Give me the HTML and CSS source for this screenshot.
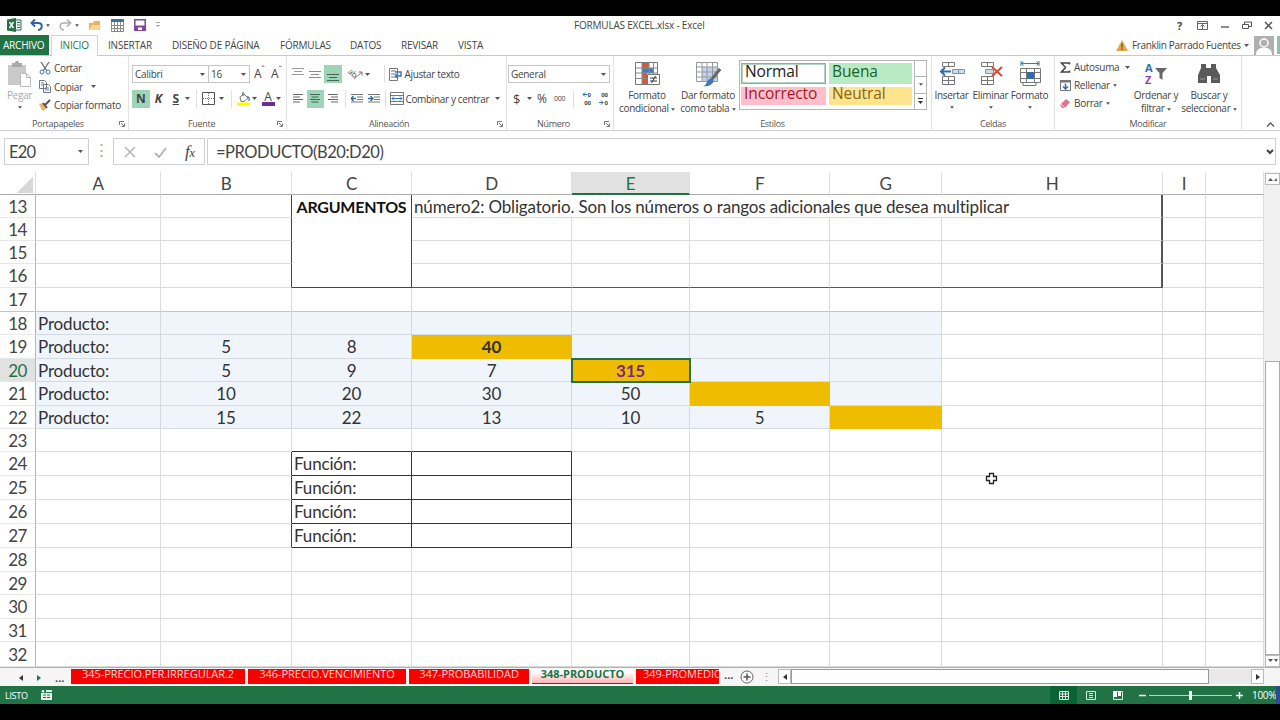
FILE: index.html
```
<!DOCTYPE html>
<html lang="es">
<head>
    <meta charset="UTF-8">
    <meta name="viewport" content="width=device-width, initial-scale=1.0">
    <title>FORMULAS EXCEL.xlsx - Excel</title>
    <link rel="stylesheet" href="styles.css">
</head>
<body>
    <svg class="defs">
        <symbol id="flecha" viewBox="0 0 5 3"><path d="M0 0h5L2.5 3z" fill="#555"/></symbol>
        <symbol id="esquina" viewBox="0 0 6 6"><path d="M.5 4V.5H5M2 2l3 3M5.5 2.5v3h-3" fill="none" stroke="#777"/></symbol>
    </svg>
    <div class="ventana">
        <!-- Barra de título -->
        <div class="titulo">
            <div class="rapido">
                <svg width="15" height="14" viewBox="0 0 15 14"><path d="M8 2h6v10H8" fill="#fff" stroke="#217346"/><path d="M10 4.5h3M10 7h3M10 9.5h3" stroke="#217346"/><path d="M0 1.5L9 0v14L0 12.5z" fill="#217346"/><path d="M2.5 4l4 6M6.500 4l-4 6" stroke="#fff" stroke-width="1.4"/></svg>
                <svg class="q1" width="13" height="12" viewBox="0 0 13 12"><path d="M1 4h7c5 0 5 6 0 7M5 .5L1.500 4 5 7.500" fill="none" stroke="#2f64a5" stroke-width="2"/></svg>
                <svg class="q2" width="4" height="3"><use href="#flecha"/></svg>
                <svg class="q3" width="13" height="12" viewBox="0 0 13 12"><path d="M12 4H5C0 4 0 10 5 11M8 .5L11.500 4 8 7.500" fill="none" stroke="#b0b0b0" stroke-width="1.600"/></svg>
                <svg class="q2" width="4" height="3"><use href="#flecha"/></svg>
                <svg class="q4" width="14" height="12" viewBox="0 0 14 12"><path d="M1 11V4h4l1-2h6v9z" fill="#e8b458"/><path d="M1 11l3-5h9l-2 5z" fill="#f6d795"/></svg>
                <svg class="q5" width="13" height="13" viewBox="0 0 13 13"><path d="M.5 .5h12v12H.5zM.5 6.500h12M.5 9.500h12M3.500 3v10M6.500 3v10M9.500 3v10" fill="#fff" stroke="#8b8b8b"/><path d="M0 0h13v3H0z" fill="#3f6fa8"/></svg>
                <svg class="q6" width="12" height="12" viewBox="0 0 12 12"><path d="M.8 .8h10.400v10.400H.8z" fill="#fff" stroke="#80479b" stroke-width="1.500"/><path d="M1 6.500h10V11H1z" fill="#80479b"/><path d="M4 8.500h4V11H4z" fill="#fff"/></svg>
                <svg class="q7" width="4" height="6" viewBox="0 0 4 6"><path d="M0 .5h4" stroke="#aaa"/><path d="M0 3h4L2 5z" fill="#999"/></svg>
            </div>
            <span class="nombre">FORMULAS EXCEL.xlsx - Excel</span>
            <div class="controles">
                <b>?</b>
                <svg width="11" height="9" viewBox="0 0 11 9"><path d="M.5 .5h10v8H.5zM.5 2.500h10M5.500 8V4M3.500 5.500l2-2 2 2" fill="none" stroke="#666"/></svg>
                <svg width="10" height="9" viewBox="0 0 10 9"><path d="M1 6h8" stroke="#666" stroke-width="1.500"/></svg>
                <svg width="10" height="9" viewBox="0 0 10 9"><path d="M.5 3.500h6v4h-6zM2.500 3V1h7v4.500H7" fill="none" stroke="#555"/></svg>
                <svg width="9" height="9" viewBox="0 0 9 9"><path d="M1 1l7 7M8 1L1 8" stroke="#555" stroke-width="1.500"/></svg>
            </div>
        </div>

        <!-- Pestañas -->
        <div class="pestanas">
            <span class="archivo">ARCHIVO</span>
            <span class="activa">INICIO</span>
            <span class="p1">INSERTAR</span>
            <span class="p2">DISEÑO DE PÁGINA</span>
            <span class="p3">FÓRMULAS</span>
            <span class="p4">DATOS</span>
            <span class="p5">REVISAR</span>
            <span class="p6">VISTA</span>
            <div class="usuario">
                <svg width="12" height="11" viewBox="0 0 12 11"><path d="M6 0l6 11H0z" fill="#e0a84a"/><path d="M6 3.500v4M6 8.500v1.500" stroke="#5a4520" stroke-width="1.200"/></svg>
                <span>Franklin Parrado Fuentes</span>
                <svg width="5" height="3"><use href="#flecha"/></svg>
                <svg class="avatar" width="20" height="19" viewBox="0 0 20 19"><path d="M0 0h20v19H0z" fill="#b0b0b0"/><circle cx="10" cy="7" r="4" fill="#b0b0b0" stroke="#fff" stroke-width="1.500"/><path d="M2 19c0-5 3-7 6-7h4c3 0 6 2 6 7z" fill="#fff"/></svg>
                <i></i>
            </div>
        </div>

        <!-- Cinta de opciones -->
        <div class="cinta">
            <div class="grupo g1">
                <div class="cuerpo">
                    <div class="grande pegar">
                        <svg width="25" height="28" viewBox="0 0 25 28"><path d="M1 4h18v20H1z" fill="#c9c9c9"/><path d="M5 2h3c0-3 4-3 4 0h3v4H5z" fill="#aaa"/><path d="M13.500 12.500h6l4 4v9h-10z" fill="#fff" stroke="#bbb"/><path d="M19.500 12.500v4h4" fill="none" stroke="#bbb"/></svg>
                        <span>Pegar</span>
                        <svg width="4" height="3"><use href="#flecha"/></svg>
                    </div>
                    <div class="lista">
                        <div><svg width="12" height="13" viewBox="0 0 12 13"><path d="M2 0l6 9M10 0L4 9" stroke="#666" stroke-width="1.200"/><circle cx="3" cy="10" r="2" fill="none" stroke="#3d78ae"/><circle cx="9" cy="10" r="2" fill="none" stroke="#3d78ae"/></svg><span>Cortar</span></div>
                        <div><svg width="12" height="13" viewBox="0 0 12 13"><path d="M.5 .5h5l2 2v6h-7zM4.500 4.500h5l2 2v6h-7z" fill="#fff" stroke="#777"/><path d="M6 8h4M6 10h4M2 3h3M2 5h2" stroke="#4c82bb"/></svg><span>Copiar</span><svg class="fl" width="5" height="3"><use href="#flecha"/></svg></div>
                        <div><svg width="12" height="12" viewBox="0 0 12 12"><path d="M0 5l5-1 3 4-3 4-2-1z" fill="#e8b468"/><path d="M4 4l4 5M6 6l5-5" stroke="#555" stroke-width="2"/></svg><span>Copiar formato</span></div>
                    </div>
                </div>
                <div class="pie">Portapapeles<svg width="6" height="6"><use href="#esquina"/></svg></div>
            </div>

            <div class="grupo g2">
                <div class="filas">
                    <div class="fila">
                        <span class="combo fuente">Calibri<svg width="5" height="3"><use href="#flecha"/></svg></span>
                        <span class="combo tam">16<svg width="5" height="3"><use href="#flecha"/></svg></span>
                        <span class="letra">A<sup>ˆ</sup></span>
                        <span class="letra">A<sup>ˇ</sup></span>
                    </div>
                    <div class="fila">
                        <b class="caja on">N</b><b class="caja"><i>K</i></b><b class="caja"><u>S</u></b>
                        <svg width="5" height="3"><use href="#flecha"/></svg>
                        <i class="sep s1"></i>
                        <svg width="13" height="13" viewBox="0 0 13 13"><path d="M.5 .5h12v12H.5z" fill="#fff" stroke="#555"/><path d="M6.500 1v11M1 6.500h11" stroke="#777" stroke-dasharray="1 1"/></svg>
                        <svg class="f1" width="5" height="3"><use href="#flecha"/></svg>
                        <i class="sep s2"></i>
                        <svg width="15" height="14" viewBox="0 0 15 14"><path d="M4 5l4-3 4 4-4 3.500H5z" fill="#fff" stroke="#777"/><path d="M7 0v4M11 5c3 0 2 2 2 4" fill="none" stroke="#3e75ad" stroke-width="1.300"/><path d="M1 10.500h13V14H1z" fill="#ff0"/></svg>
                        <svg class="f2" width="5" height="3"><use href="#flecha"/></svg>
                        <span class="color">A</span>
                        <svg class="f2" width="5" height="3"><use href="#flecha"/></svg>
                    </div>
                </div>
                <div class="pie">Fuente<svg width="6" height="6"><use href="#esquina"/></svg></div>
            </div>

            <div class="grupo g3">
                <div class="filas">
                    <div class="fila">
                        <span class="caja"><svg width="12" height="13" viewBox="0 0 12 13"><path d="M0 .5h12M2 3.500h8M0 6.500h12" stroke="#999"/></svg></span>
                        <span class="caja"><svg width="12" height="13" viewBox="0 0 12 13"><path d="M0 3.500h12M2 6.500h8M0 9.500h12" stroke="#888"/></svg></span>
                        <span class="caja on"><svg width="12" height="13" viewBox="0 0 12 13"><path d="M0 6.500h12M2 9.500h8M0 12.500h12" stroke="#4a6659"/></svg></span>
                        <svg class="orienta" width="13" height="12" viewBox="0 0 13 12"><text x="1" y="5" transform="rotate(40)">ab</text><path d="M4 11l8-7M8.500 4H12v3.500" fill="none" stroke="#777"/></svg>
                        <svg class="f3" width="5" height="3"><use href="#flecha"/></svg>
                        <i class="sep s3"></i>
                        <svg width="14" height="13" viewBox="0 0 14 13"><path d="M.5 .5h8v12h-8zM2 3h5M2 6h5M2 9h5" fill="#fff" stroke="#777"/><path d="M6 4h6v4H7M9 5.500L6.500 8 9 10.500" fill="none" stroke="#3c78b5" stroke-width="1.500"/></svg>
                        <span class="txt">Ajustar texto</span>
                    </div>
                    <div class="fila">
                        <span class="caja"><svg width="10" height="9" viewBox="0 0 10 9"><path d="M0 .5h10M0 3h7M0 5.500h10M0 8h7" stroke="#666"/></svg></span>
                        <span class="caja on"><svg width="10" height="9" viewBox="0 0 10 9"><path d="M0 .5h10M1.500 3h7M0 5.500h10M1.500 8h7" stroke="#4a6659"/></svg></span>
                        <span class="caja"><svg width="10" height="9" viewBox="0 0 10 9"><path d="M0 .5h10M3 3h7M0 5.500h10M3 8h7" stroke="#666"/></svg></span>
                        <i class="sep s4"></i>
                        <svg width="12" height="9" viewBox="0 0 12 9"><path d="M0 .5h12M6 3h6M6 5.500h6M0 8h12" stroke="#777"/><path d="M5 4.500H0M2.500 2L0 4.500 2.500 7" fill="none" stroke="#2d6aa8" stroke-width="1.300"/></svg>
                        <svg class="sangria" width="12" height="9" viewBox="0 0 12 9"><path d="M0 .5h12M6 3h6M6 5.500h6M0 8h12" stroke="#777"/><path d="M0 4.500h5M2.500 2L5 4.500 2.500 7" fill="none" stroke="#2d6aa8" stroke-width="1.300"/></svg>
                        <i class="sep s5"></i>
                        <svg width="14" height="13" viewBox="0 0 14 13"><path d="M.5 .5h13v12H.5zM1 3.500h12M1 9.500h12" fill="#fff" stroke="#777"/><path d="M2 6.500h10M4 4.500l-2 2 2 2M10 4.500l2 2-2 2" fill="none" stroke="#3c78b5"/></svg>
                        <span class="txt">Combinar y centrar</span>
                        <svg class="f4" width="5" height="3"><use href="#flecha"/></svg>
                    </div>
                </div>
                <div class="pie">Alineación<svg width="6" height="6"><use href="#esquina"/></svg></div>
            </div>

            <div class="grupo g4">
                <div class="filas">
                    <div class="fila"><span class="combo general">General<svg width="5" height="3"><use href="#flecha"/></svg></span></div>
                    <div class="fila numero">
                        <span class="pesos">$</span><svg width="5" height="3"><use href="#flecha"/></svg>
                        <span class="pct">%</span><span class="miles">000</span>
                        <i class="sep s6"></i>
                        <div class="dec">
                            <div><svg width="5" height="5" viewBox="0 0 5 5"><path d="M5 2.500H1M3 .5l-2 2 2 2" fill="none" stroke="#2e6db0"/></svg><span>0</span></div>
                            <div><span>00</span></div>
                        </div>
                        <div class="dec">
                            <div><span>00</span></div>
                            <div><svg width="5" height="5" viewBox="0 0 5 5"><path d="M0 2.500h4M2 .5l2 2-2 2" fill="none" stroke="#2e6db0"/></svg><span>0</span></div>
                        </div>
                    </div>
                </div>
                <div class="pie">Número<svg width="6" height="6"><use href="#esquina"/></svg></div>
            </div>

            <div class="grupo g5">
                <div class="cuerpo">
                    <div class="grande cond">
                        <svg width="26" height="26" viewBox="0 0 26 26"><path d="M1.500 1.500h22v22h-22z" fill="#fff" stroke="#777"/><path d="M8 2h7v5H8zM8 17h7v6H8z" fill="#d9573b"/><path d="M8 7h11v5H8z" fill="#3f7fc1"/><path d="M8 12h5v5H8z" fill="#d9573b"/><path d="M1.500 7h22M1.500 12h22M1.500 17.500h22M8 1.500v22M15 1.500v22M19.500 1.500v22" fill="none" stroke="#888"/><path d="M13.500 13.500h12v10h-12z" fill="#fff" stroke="#777"/><path d="M16 17h7M16 20h7M21.500 15l-4 7" stroke="#333"/></svg>
                        <span>Formato</span>
                        <span>condicional <svg width="4" height="3"><use href="#flecha"/></svg></span>
                    </div>
                    <div class="grande tabla">
                        <svg width="26" height="26" viewBox="0 0 26 26"><path d="M1.500 1.500h21v19h-21z" fill="#fff"/><path d="M7 6h15v14H7z" fill="#bcd3ea"/><path d="M1.500 1.500h21v19h-21zM1.500 6h21M1.500 11h21M1.500 16h21M7 1v20M12 1v20M17.500 1v20" fill="none" stroke="#999"/><path d="M25 8l-8 10" stroke="#666" stroke-width="3"/><path d="M8 25c4 0 3-6 8-8l3 3c-2 4-6 6-11 5z" fill="#3f78b5"/></svg>
                        <span>Dar formato</span>
                        <span>como tabla <svg width="4" height="3"><use href="#flecha"/></svg></span>
                    </div>
                    <div class="galeria">
                        <span class="normal">Normal</span><span class="buena">Buena</span>
                        <span class="incorrecto">Incorrecto</span><span class="neutral">Neutral</span>
                    </div>
                    <div class="desliza">
                        <span></span>
                        <span><svg width="4" height="3"><use href="#flecha"/></svg></span>
                        <span><svg width="5" height="6" viewBox="0 0 5 6"><path d="M0 .5h5" stroke="#333"/><path d="M0 3h5L2.500 6z" fill="#333"/></svg></span>
                    </div>
                </div>
                <div class="pie">Estilos</div>
            </div>

            <div class="grupo g6">
                <div class="cuerpo">
                    <div class="grande">
                        <svg width="26" height="26" viewBox="0 0 26 26"><path d="M3.500 1.500h12v4h-12zM9.500 1.500v4M3.500 15.500h12v8h-12zM9.500 15.500v8M3.500 19.500h12" fill="#fff" stroke="#777"/><path d="M13.500 8.500h12v4h-12zM19.500 8.500v4" fill="#c8dbf0" stroke="#7b93b5"/><path d="M12 10.500H2M6 6.500l-4 4 4 4" fill="none" stroke="#2e6db0" stroke-width="2"/></svg>
                        <span>Insertar</span><svg width="4" height="3"><use href="#flecha"/></svg>
                    </div>
                    <div class="grande">
                        <svg width="26" height="26" viewBox="0 0 26 26"><path d="M3.500 1.500h12v4h-12zM9.500 1.500v4M3.500 15.500h12v8h-12zM9.500 15.500v8M3.500 19.500h12" fill="#fff" stroke="#777"/><path d="M7.500 8.500h8v4h-8z" fill="#c8dbf0" stroke="#7b93b5"/><path d="M14 6l10 9M24 6l-10 9" stroke="#d9482b" stroke-width="2"/></svg>
                        <span>Eliminar</span><svg width="4" height="3"><use href="#flecha"/></svg>
                    </div>
                    <div class="grande">
                        <svg width="26" height="26" viewBox="0 0 26 26"><path d="M4 2.500h18M4 0v5M22 0v5M6.500 .5l-2 2 2 2M19.500 .5l2 2-2 2" fill="none" stroke="#3f78b5"/><path d="M3.500 7.500h20v14h-20zM3.500 11.500h20M3.500 17.500h20M9.500 7.500v14M17.500 7.500v14M6 21.500v3h13v-3" fill="#fff" stroke="#777"/><path d="M10 11h7v7h-7z" fill="#2e6db0"/></svg>
                        <span>Formato</span><svg width="4" height="3"><use href="#flecha"/></svg>
                    </div>
                </div>
                <div class="pie">Celdas</div>
            </div>

            <div class="grupo g7">
                <div class="cuerpo">
                    <div class="lista edicion">
                        <div><svg width="11" height="11" viewBox="0 0 11 11"><path d="M9.500 2.500V1H1.500l4 4.500-4 4.500h8V8.500" fill="none" stroke="#444" stroke-width="1.500"/></svg><span>Autosuma</span><svg class="fa" width="5" height="3"><use href="#flecha"/></svg></div>
                        <div><svg width="11" height="11" viewBox="0 0 11 11"><path d="M.5 .5h10v10H.5z" fill="#fff" stroke="#777"/><path d="M0 0h11v2.500H0z" fill="#777"/><path d="M5.500 3.500V9M3 6.500L5.500 9 8 6.500" fill="none" stroke="#2e6db0" stroke-width="1.500"/></svg><span>Rellenar</span><svg class="fb" width="4" height="3"><use href="#flecha"/></svg></div>
                        <div><svg width="11" height="11" viewBox="0 0 11 11"><path d="M6 1l4 3-5 6H2L0 7z" fill="#e5728d"/><path d="M1 6l4 4" stroke="#fff"/></svg><span>Borrar</span><svg class="fb" width="4" height="3"><use href="#flecha"/></svg></div>
                    </div>
                    <div class="grande ordenar">
                        <div class="orden">
                            <div class="az"><b>A</b><b class="zz">Z</b></div>
                            <svg width="12" height="13" viewBox="0 0 12 13"><path d="M0 0h12L7.500 5v7l-3-2V5z" fill="#666"/></svg>
                        </div>
                        <span>Ordenar y</span>
                        <span>filtrar <svg width="4" height="3"><use href="#flecha"/></svg></span>
                    </div>
                    <div class="grande buscar">
                        <svg width="26" height="26" viewBox="0 0 26 26"><path d="M5 3h5v4h5V3h5v4l4 7v8h-9v-7h-4v7H2v-8l3-7z" fill="#5a5a5a"/><path d="M4 18h5M17 18h5" stroke="#999"/></svg>
                        <span>Buscar y</span>
                        <span>seleccionar <svg width="4" height="3"><use href="#flecha"/></svg></span>
                    </div>
                </div>
                <div class="pie">Modificar</div>
            </div>
            <div class="plegar"><svg width="9" height="5" viewBox="0 0 9 5"><path d="M1 4.500L4.500 1 8 4.500" fill="none" stroke="#555" stroke-width="1.300"/></svg></div>
        </div>

        <!-- Barra de fórmulas -->
        <div class="formulas">
            <div class="celda-actual">E20<svg width="5" height="3"><use href="#flecha"/></svg></div>
            <span class="puntos">⋮</span>
            <div class="botones">
                <svg width="12" height="12" viewBox="0 0 12 12"><path d="M1 1l10 10M11 1L1 11" stroke="#b5b5b5" stroke-width="1.500"/></svg>
                <svg width="13" height="12" viewBox="0 0 13 12"><path d="M1 7l4 4 7-9" fill="none" stroke="#b5b5b5" stroke-width="2"/></svg>
                <span class="fx">f<small>x</small></span>
            </div>
            <div class="entrada"><span>=PRODUCTO(B20:D20)</span><svg width="8" height="6" viewBox="0 0 8 6"><path d="M1 1l3 3 3-3" fill="none" stroke="#444" stroke-width="2"/></svg></div>
        </div>

        <!-- Hoja -->
        <div class="hoja">
            <table>
                <colgroup><col class="c0"><col class="cA"><col class="cB"><col class="cC"><col class="cD"><col class="cE"><col class="cF"><col class="cG"><col class="cH"><col class="cI"><col class="cJ"></colgroup>
                <tr class="cab"><th class="todo"><i></i></th><th>A</th><th>B</th><th>C</th><th>D</th><th class="sel">E</th><th>F</th><th>G</th><th>H</th><th>I</th><th></th></tr>
                <tr class="h23"><th>13</th><td></td><td class="nd"></td><td rowspan="4" class="arg">ARGUMENTOS</td><td colspan="5" class="texto der"><span>número2: Obligatorio. Son los números o rangos adicionales que desea multiplicar</span></td><td></td><td></td></tr>
                <tr class="h23"><th>14</th><td></td><td class="nd"></td><td></td><td></td><td></td><td></td><td class="der"></td><td></td><td></td></tr>
                <tr class="h23"><th>15</th><td></td><td class="nd"></td><td></td><td></td><td></td><td></td><td class="der"></td><td></td><td></td></tr>
                <tr class="h24"><th>16</th><td></td><td class="nd"></td><td class="ab"></td><td class="ab"></td><td class="ab"></td><td class="ab"></td><td class="ab der"></td><td></td><td></td></tr>
                <tr class="h24 previa"><th>17</th><td></td><td></td><td></td><td></td><td></td><td></td><td></td><td></td><td></td><td></td></tr>
                <tr class="h23 azul"><th>18</th><td class="texto">Producto:</td><td></td><td></td><td></td><td></td><td></td><td></td><td></td><td></td><td></td></tr>
                <tr class="h24 azul"><th>19</th><td class="texto">Producto:</td><td>5</td><td>8</td><td class="oro">40</td><td></td><td></td><td></td><td></td><td></td><td></td></tr>
                <tr class="h23 azul"><th class="sel">20</th><td class="texto">Producto:</td><td>5</td><td>9</td><td>7</td><td class="oro cursor">315</td><td></td><td></td><td></td><td></td><td></td></tr>
                <tr class="h24 azul"><th>21</th><td class="texto">Producto:</td><td>10</td><td>20</td><td>30</td><td>50</td><td class="oro"></td><td></td><td></td><td></td><td></td></tr>
                <tr class="h23 azul"><th>22</th><td class="texto">Producto:</td><td>15</td><td>22</td><td>13</td><td>10</td><td>5</td><td class="oro"></td><td></td><td></td><td></td></tr>
                <tr class="h23 antes"><th>23</th><td></td><td></td><td></td><td></td><td></td><td></td><td></td><td></td><td></td><td></td></tr>
                <tr class="h24"><th>24</th><td></td><td class="nd"></td><td class="fun">Función:</td><td class="fun"></td><td></td><td></td><td></td><td></td><td></td><td></td></tr>
                <tr class="h24"><th>25</th><td></td><td class="nd"></td><td class="fun">Función:</td><td class="fun"></td><td></td><td></td><td></td><td></td><td></td><td></td></tr>
                <tr class="h24"><th>26</th><td></td><td class="nd"></td><td class="fun">Función:</td><td class="fun"></td><td></td><td></td><td></td><td></td><td></td><td></td></tr>
                <tr class="h24"><th>27</th><td></td><td class="nd"></td><td class="fun">Función:</td><td class="fun"></td><td></td><td></td><td></td><td></td><td></td><td></td></tr>
                <tr class="h24"><th>28</th><td></td><td></td><td></td><td></td><td></td><td></td><td></td><td></td><td></td><td></td></tr>
                <tr class="h23"><th>29</th><td></td><td></td><td></td><td></td><td></td><td></td><td></td><td></td><td></td><td></td></tr>
                <tr class="h24"><th>30</th><td></td><td></td><td></td><td></td><td></td><td></td><td></td><td></td><td></td><td></td></tr>
                <tr class="h23"><th>31</th><td></td><td></td><td></td><td></td><td></td><td></td><td></td><td></td><td></td><td></td></tr>
                <tr class="h25"><th>32</th><td></td><td></td><td></td><td></td><td></td><td></td><td></td><td></td><td></td><td></td></tr>
            </table>
            <div class="vertical">
                <span class="sube"><svg width="9" height="4" viewBox="0 0 9 4"><path d="M0 4l2.500-3L5 4zM6 4l2.500-3L9 4z" fill="#555"/></svg></span>
                <div class="pista"></div>
                <div class="pulgar"></div>
                <span class="baja"><svg width="10" height="4" viewBox="0 0 10 4"><path d="M0 0h5L2.500 3zM6 0h4L8 3z" fill="#555"/></svg></span>
            </div>
            <svg class="puntero" width="15" height="15" viewBox="0 0 15 15"><path d="M5.500 2.500h4v3h3v4h-3v3h-4v-3h-3v-4h3z" fill="#fff" stroke="#222" stroke-width="1.300"/></svg>
        </div>

        <!-- Pestañas de las hojas -->
        <div class="hojas">
            <div class="nav"><svg width="4" height="6" viewBox="0 0 4 6"><path d="M4 0v6L0 3z" fill="#333"/></svg><svg width="4" height="6" viewBox="0 0 4 6"><path d="M0 0v6l4-3z" fill="#217346"/></svg><span>...</span></div>
            <span class="t1">345-PRECIO.PER.IRREGULAR.2</span>
            <span class="t2">346-PRECIO.VENCIMIENTO</span>
            <span class="t3">347-PROBABILIDAD</span>
            <span class="t4">348-PRODUCTO</span>
            <span class="t5">349-PROMEDIO</span>
            <div class="mas">...</div>
            <svg class="nueva" width="14" height="14" viewBox="0 0 14 14"><circle cx="7" cy="7" r="6" fill="#fff" stroke="#666"/><path d="M7 3.500v7M3.500 7h7" stroke="#555" stroke-width="1.500"/></svg>
            <span class="tres">⋮</span>
            <div class="horizontal">
                <span class="lado"><svg width="4" height="6" viewBox="0 0 4 6"><path d="M4 0v6L0 3z" fill="#333"/></svg></span>
                <div class="barra"></div>
                <span class="lado fin"><svg width="4" height="6" viewBox="0 0 4 6"><path d="M0 0v6l4-3z" fill="#333"/></svg></span>
            </div>
        </div>

        <!-- Barra de estado -->
        <div class="estado">
            <span class="listo">LISTO</span>
            <svg width="11" height="10" viewBox="0 0 11 10"><path d="M0 3h11v7H0zM5 0h6v2H5z" fill="#e6f0ea"/><circle cx="2" cy="1.300" r="1.300" fill="#fff"/><path d="M2 5h3M6 5h3M2 7.500h3M6 7.500h3" stroke="#217346"/></svg>
            <div class="vistas">
                <span class="vista on"><svg width="10" height="9" viewBox="0 0 10 9"><path d="M.5 .5h9v8h-9zM.5 3h9M.5 5.500h9M3.500 0v9M6.500 0v9" fill="none" stroke="#dcebe2"/></svg></span>
                <span class="vista"><svg width="10" height="9" viewBox="0 0 10 9"><path d="M.5 .5h9v8h-9zM3 2.500h4M3 4.500h4M3 6.500h4" fill="none" stroke="#dcebe2"/></svg></span>
                <span class="vista"><svg width="10" height="9" viewBox="0 0 10 9"><path d="M.5 .5h9v8h-9z" fill="none" stroke="#dcebe2"/><path d="M0 0h4v6H0zM5 0h3v5H5z" fill="#fff"/></svg></span>
            </div>
            <svg width="104" height="11" viewBox="0 0 104 11"><path d="M0 5.500h7M97 5.500h7M100.500 2v7" stroke="#fff" stroke-width="1.500"/><path d="M10 5.500h83" stroke="#b9d4c5"/><path d="M50 1h3v9h-3z" fill="#fff"/></svg>
            <span class="zoom">100%</span>
            <i></i>
        </div>
    </div>
</body>
</html>
```
FILE: styles.css
```
* {
    box-sizing: border-box;
}
body {
    margin: 0;
    padding: 16px 0;
    height: 720px;
    background-color: #000;
    font-family: "Open Sans", "Noto Sans", sans-serif;
    font-size: 10px;
    letter-spacing: -0.3px;
    color: #444;
    overflow: hidden;
}
.defs {
    display: none;
}
svg {
    flex: none;
}
.ventana {
    display: flex;
    flex-direction: column;
    width: 1280px;
    height: 688px;
    background-color: #fff;
    overflow: hidden;
}
/* Título */
.titulo {
    display: flex;
    align-items: center;
    height: 19px;
    padding-bottom: 1px;
}
.rapido {
    display: flex;
    align-items: center;
    width: 574px;
    padding-left: 7px;
}
.q1 { margin-left: 8px; }
.q2 { margin-left: 3px; }
.q3 { margin-left: 9px; }
.q4 { margin-left: 9px; }
.q5 { margin-left: 9px; }
.q6 { margin-left: 10px; }
.q7 { margin-left: 10px; }
.nombre {
    flex: 1;
    letter-spacing: -0.2px;
}
.controles {
    display: flex;
    align-items: center;
    gap: 12px;
    padding-right: 7px;
}
.controles b {
    width: 8px;
    font-size: 11px;
}
/* Pestañas */
.pestanas {
    display: flex;
    height: 21px;
    border-bottom: 1px solid #c8c8c8;
    line-height: 20px;
    letter-spacing: -0.2px;
    white-space: nowrap;
}
.archivo {
    width: 49px;
    padding-left: 3px;
    background-color: #217346;
    color: #fff;
}
.activa {
    width: 47px;
    height: 21px;
    margin-left: 2px;
    padding-left: 8px;
    border: 1px solid #d4d4d4;
    border-bottom: none;
    background-color: #fff;
    color: #217346;
    line-height: 18px;
}
.p1 { width: 64px; margin-left: 10px; }
.p2 { width: 108px; }
.p3 { width: 70px; }
.p4 { width: 51px; }
.p5 { width: 57px; }
.usuario {
    display: flex;
    align-items: center;
    margin-left: auto;
    letter-spacing: -0.35px;
}
.usuario span {
    width: 108px;
    margin: 0 4px;
}
.avatar { margin: 0 3px 0 5px; }
.usuario i {
    width: 3px;
    height: 18px;
    background-color: #8ebfb2;
}
/* Cinta */
.cinta {
    display: flex;
    height: 75px;
    border-bottom: 1px solid #d0d0d0;
    white-space: nowrap;
}
.grupo {
    display: flex;
    flex-direction: column;
    border-right: 1px solid #e2e2e2;
}
.g1 { width: 129px; }
.g2 { width: 158px; }
.g3 { width: 220px; }
.g4 { width: 107px; }
.g5 { width: 318px; }
.g6 { width: 123px; }
.g7 { width: 187px; }
.cuerpo {
    display: flex;
    height: 61px;
}
.pie {
    display: flex;
    justify-content: center;
    align-items: center;
    height: 13px;
    font-size: 9px;
    color: #555;
}
.pie svg {
    margin-left: auto;
    margin-right: 3px;
}
.g1 .pie, .g2 .pie, .g3 .pie, .g4 .pie { justify-content: flex-start; }
.g1 .pie { padding-left: 32px; }
.g2 .pie { padding-left: 59px; }
.g3 .pie { padding-left: 82px; }
.g4 .pie { padding-left: 30px; }
.grande {
    display: flex;
    flex-direction: column;
    align-items: center;
    width: 39px;
    padding-top: 5px;
    line-height: 13px;
}
.grande > svg:first-child {
    margin-bottom: 2px;
}
.grande > svg:last-child {
    margin-top: 4px;
}
.pegar > svg:first-child { margin-bottom: 0; }
.pegar { color: #aaa; }
.cond { width: 66px; }
.tabla { width: 56px; margin-right: 2px; }
.ordenar { width: 54px; }
.buscar { width: 52px; }
.grande span svg { vertical-align: middle; }
.orden {
    display: flex;
    align-items: center;
    gap: 3px;
    width: 22px;
    height: 26px;
    margin-bottom: 2px;
}
.az {
    display: flex;
    flex-direction: column;
    width: 8px;
    color: #2e6db0;
    font-size: 11px;
    line-height: 12px;
}
.zz { color: #8a44b5; }
.lista div {
    display: flex;
    align-items: center;
    height: 18.5px;
}
.lista {
    padding-top: 3px;
}
.lista span { margin-left: 3px; }
.fl { margin-left: 8px; }
.edicion { width: 74px; padding-left: 5px; padding-top: 2px; }
.edicion div { height: 18px; }
.fa { margin-left: 6px; }
.fb { margin-left: 3px; }
.filas {
    height: 61px;
    padding: 6px 0 0 3px;
}
.g3 .filas { padding-left: 2px; }
.g4 .filas { padding-left: 1px; }
.fila {
    display: flex;
    align-items: center;
    height: 24px;
}
.fila + .fila { height: 25px; }
.combo {
    display: flex;
    justify-content: space-between;
    align-items: center;
    height: 18px;
    padding: 0 3px 0 2px;
    border: 1px solid #c6c6c6;
}
.fuente { width: 77px; }
.tam { width: 41px; border-left: none; }
.general { width: 102px; }
.letra {
    width: 17px;
    padding-left: 4px;
    font-size: 12px;
    line-height: 14px;
}
.letra sup { font-size: 9px; line-height: 0; }
.caja {
    display: flex;
    justify-content: center;
    align-items: center;
    width: 17.5px;
    height: 18px;
    font-size: 12px;
}
.on { background-color: #9fd5b7; }
.sep {
    width: 1px;
    height: 18px;
    background-color: #e0e0e0;
}
.s1 { margin: 0 5px 0 6px; }
.f1 { margin-left: 4px; }
.s2 { margin: 0 4px 0 7px; }
.f2 { margin-left: 1px; }
.color {
    width: 13px;
    height: 14px;
    margin-left: 5px;
    border-bottom: 4px solid #6a2c9c;
    font-size: 12px;
    line-height: 10px;
    text-align: center;
}
.orienta { margin-left: 8px; overflow: visible; }
.orienta text { font-size: 8px; fill: #555; }
.f3 { margin-left: 2px; }
.s3 { margin: 0 4px 0 14px; }
.txt { margin-left: 2px; letter-spacing: -0.35px; }
.s4 { margin: 0 5px 0 3px; }
.sangria { margin-left: 5px; }
.s5 { margin: 0 4px 0 5px; }
.f4 { margin-left: 6px; }
.pesos { width: 14px; margin: 0 0 0 5px; font-size: 13px; }
.pct { width: 15px; margin-left: 5px; font-size: 12px; }
.miles { width: 14px; margin-left: 2px; font-size: 7px; }
.s6 { margin: 0 5px 0 5px; }
.dec {
    width: 12px;
    margin-right: 5px;
    font-size: 6px;
    font-weight: bold;
    letter-spacing: 0;
    line-height: 8px;
}
.dec div {
    display: flex;
    justify-content: flex-end;
    align-items: center;
    gap: 1px;
    height: 8px;
}
.galeria {
    display: grid;
    grid-template-columns: 85px 83px;
    grid-template-rows: 21px 18px;
    gap: 3px;
    width: 176px;
    height: 50px;
    margin: 4px 0 0 1px;
    padding: 2px 1px;
    border: 1px solid #b5b5b5;
    font-size: 15.5px;
    letter-spacing: -0.1px;
}
.galeria span {
    padding-left: 3px;
    line-height: 16px;
}
.galeria .normal {
    border: 1px solid #7fb79a;
    outline: 1px solid #b5d5c4;
    outline-offset: -2px;
    color: #222;
    line-height: 15px;
}
.buena { background-color: #b9eac4; color: #1b6327; }
.galeria .incorrecto { background-color: #ffbfca; color: #9c1c2c; line-height: 12px; }
.galeria .neutral { background-color: #ffe48e; color: #8a6411; line-height: 12px; }
.desliza {
    display: flex;
    flex-direction: column;
    width: 12px;
    height: 50px;
    margin-top: 4px;
}
.desliza span {
    display: flex;
    flex: 1;
    justify-content: center;
    align-items: center;
    border: 1px solid #b5b5b5;
    border-left: none;
}
.desliza span + span { border-top: none; }
.plegar {
    padding: 60px 0 0 24px;
}
/* Barra de fórmulas */
.formulas {
    display: flex;
    height: 41px;
    padding: 7px 4px 7px;
    font-family: Lato, "Open Sans", sans-serif;
    font-size: 16.5px;
    letter-spacing: -0.45px;
}
.formulas > div {
    display: flex;
    align-items: center;
    border: 1px solid #d0d0d0;
}
.formulas .celda-actual {
    justify-content: space-between;
    width: 85px;
    padding: 0 5px 0 4px;
    letter-spacing: -0.8px;
}
.puntos {
    width: 24px;
    text-align: center;
    line-height: 25px;
    color: #aaa;
}
.formulas .botones {
    width: 92px;
    padding-left: 10px;
    gap: 18px;
}
.fx {
    font-family: "Liberation Serif", serif;
    font-style: italic;
    font-size: 17px;
}
.fx small { font-size: 13px; }
.formulas .entrada {
    flex: 1;
    justify-content: space-between;
    margin-left: 2px;
    padding: 0 1px 0 8px;
}
/* Hoja */
.hoja {
    position: relative;
    display: flex;
    height: 495px;
}
table {
    flex: none;
    width: 1264px;
    height: 495px;
    table-layout: fixed;
    border-collapse: separate;
    border-spacing: 0;
    font-family: Lato, "Open Sans", sans-serif;
    font-size: 17px;
    letter-spacing: -0.16px;
    color: #333;
}
.c0 { width: 36px; }
.cA { width: 125px; }
.cB { width: 131px; }
.cC { width: 120px; }
.cD { width: 160px; }
.cE { width: 118px; }
.cF { width: 140px; }
.cG { width: 112px; }
.cH { width: 221px; }
.cI { width: 43px; }
.cJ { width: 58px; }
.cab { height: 23px; }
.h23 { height: 23px; }
.h24 { height: 24px; }
.h25 { height: 25px; }
th, td {
    padding: 1px 0 0;
    border-right: 1px solid #dcdcdc;
    border-bottom: 1px solid #dadada;
    font-weight: normal;
    line-height: 20px;
    text-align: center;
    white-space: nowrap;
}
th {
    color: #444;
    letter-spacing: -0.5px;
    border-right-color: #b5b5b5;
    border-bottom-color: #e8e8e8;
}
.cab th {
    border-right-color: #e0e0e0;
    border-bottom-color: #ababab;
}
.sel {
    background-color: #e1e1e1;
    color: #217346;
}
.cab .sel { border-bottom: 2px solid #217346; line-height: 19px; }
.todo i {
    display: block;
    margin: 2px 2px 0 auto;
    width: 17px;
    height: 17px;
    background: linear-gradient(135deg, transparent 50%, #d8d8d8 50%);
}
.texto {
    padding-left: 2px;
    text-align: left;
}
.azul td:nth-child(-n+8) {
    background-color: #eff5fa;
    border-color: #d3dbe2;
}
td.nd { border-right: 1px solid #444; }
td.der { border-right: 2px solid #555; }
td.ab { border-bottom: 1px solid #555; }
td.arg {
    padding-top: 0;
    border-right: 1px solid #444;
    border-bottom: 1px solid #444;
    font-size: 16px;
    font-weight: bold;
    letter-spacing: -0.25px;
    line-height: 23px;
    color: #111;
    vertical-align: top;
}
.previa td, .previa th { border-bottom-color: #c5c5c5; }
.azul td.oro {
    background-color: #f0bc00;
    border-color: #f0bc00;
    font-weight: bold;
}
.azul td.cursor {
    outline: 2px solid #217346;
    outline-offset: -1px;
    color: #7a2c7a;
}
.antes td:nth-child(4), .antes td:nth-child(5) { border-bottom-color: #333; }
td.fun {
    padding-left: 2px;
    border-right-color: #333;
    border-bottom-color: #333;
    text-align: left;
}
.vertical {
    display: flex;
    flex-direction: column;
    width: 16px;
    padding-left: 1px;
    background-color: #f1f1f1;
}
.vertical span {
    display: flex;
    justify-content: center;
    align-items: center;
    height: 12px;
    border: 1px solid #bbb;
    background-color: #fff;
}
.vertical .sube { margin-top: 1px; }
.pista { height: 176px; }
.pulgar {
    flex: 1;
    border: 1px solid #aaa;
    background-color: #fff;
}
.puntero {
    position: absolute;
    left: 984px;
    top: 299px;
}
/* Pestañas de hojas */
.hojas {
    display: flex;
    height: 19px;
    padding-top: 1px;
    border-top: 1px solid #b0b0b0;
    background-color: #f5f5f5;
    font-size: 11px;
    letter-spacing: -0.04px;
    white-space: nowrap;
}
.nav {
    display: flex;
    align-items: center;
    gap: 14px;
    width: 71px;
    padding-left: 19px;
}
.nav span, .mas { font-weight: bold; letter-spacing: 0; line-height: 12px; }
.t1, .t2, .t3, .t4, .t5 {
    height: 15px;
    margin-right: 3px;
    background-color: #f90000;
    color: #ffd6d6;
    line-height: 10px;
    text-align: center;
}
.t1 { width: 174px; }
.t2 { width: 158px; }
.t3 { width: 120px; }
.hojas .t4 {
    width: 101px;
    border-bottom: 1px solid #444;
    background: linear-gradient(#fff 20%, #ffb3b3);
    color: #217346;
    font-weight: bold;
}
.t5 { width: 83px; padding-left: 7px; }
.hojas .t5 { text-align: left; margin-right: 0; overflow: hidden; }
.mas { width: 21px; padding-left: 5px; }
.nueva { margin-top: 1px; }
.tres { width: 24px; text-align: center; color: #888; }
.horizontal {
    display: flex;
    width: 486px;
    height: 15px;
    background-color: #e9e9e9;
}
.lado {
    display: flex;
    justify-content: center;
    align-items: center;
    width: 13px;
    border: 1px solid #bbb;
    background-color: #fff;
}
.barra {
    width: 418px;
    border: 1px solid #999;
    background-color: #fff;
}
.fin { margin-left: auto; }
/* Estado */
.estado {
    display: flex;
    align-items: center;
    height: 18px;
    background-color: #217346;
    color: #fff;
}
.listo { width: 41px; padding-left: 5px; font-size: 9px; }
.vistas {
    display: flex;
    height: 18px;
    margin: 0 8px 0 auto;
}
.vista {
    display: flex;
    justify-content: center;
    align-items: center;
    width: 27px;
}
.vista.on { margin-left: 0; background-color: #0a6332; }
.zoom { width: 24px; margin-left: 9px; }
.estado i {
    width: 4px;
    height: 18px;
    background-color: #2a4d8f;
}
```
